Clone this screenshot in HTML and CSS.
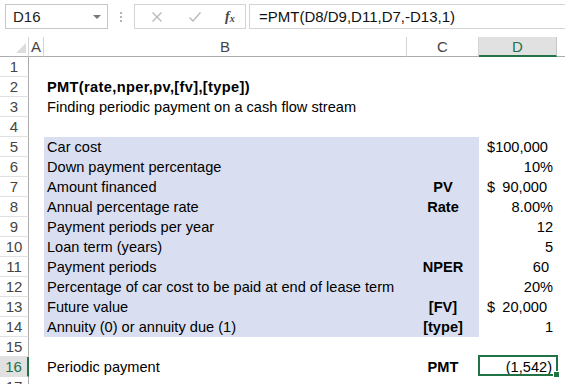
FILE: index.html
```html
<!DOCTYPE html>
<html>
<head>
<meta charset="utf-8">
<link rel="stylesheet" href="styles.css">
</head>
<body>
<div class="toolbar">
  <div class="namebox"><span>D16</span><span class="caret"></span></div>
  <div class="dots"><i></i><i></i><i></i></div>
  <div class="fxbox">
    <svg class="ic" width="12" height="12" viewBox="0 0 12 12"><path d="M1.5 1.5 L10.5 10.5 M10.5 1.5 L1.5 10.5" stroke="#b9b9b9" stroke-width="1.4" fill="none"/></svg>
    <svg class="ic" width="14" height="12" viewBox="0 0 14 12"><path d="M1.5 6.5 L5 10 L12.5 1.5" stroke="#b9b9b9" stroke-width="1.4" fill="none"/></svg>
    <span class="fx">f<sub>x</sub></span>
  </div>
  <div class="formula">=PMT(D8/D9,D11,D7,-D13,1)</div>
</div>
<div class="sheet">
  <div class="row head">
    <div class="corner"><span class="tri"></span></div>
    <div class="ch">A</div><div class="ch">B</div><div class="ch">C</div><div class="ch sel">D</div><div class="ch last"></div>
  </div>
  <div class="row"><div class="rh">1</div><div></div><div></div><div></div><div></div><div></div></div>
  <div class="row"><div class="rh">2</div><div></div><div class="b title">PMT(rate,nper,pv,[fv],[type])</div><div></div><div></div><div></div></div>
  <div class="row"><div class="rh">3</div><div></div><div class="b">Finding periodic payment on a cash flow stream</div><div></div><div></div><div></div></div>
  <div class="row"><div class="rh">4</div><div></div><div></div><div></div><div></div><div></div></div>
  <div class="row"><div class="rh">5</div><div></div><div class="b hl">Car cost</div><div class="c hl"></div><div class="d acc"><span>$</span><span>100,000</span></div><div></div></div>
  <div class="row"><div class="rh">6</div><div></div><div class="b hl">Down payment percentage</div><div class="c hl"></div><div class="d pct">10%</div><div></div></div>
  <div class="row"><div class="rh">7</div><div></div><div class="b hl">Amount financed</div><div class="c hl">PV</div><div class="d acc"><span>$</span><span>90,000</span></div><div></div></div>
  <div class="row"><div class="rh">8</div><div></div><div class="b hl">Annual percentage rate</div><div class="c hl">Rate</div><div class="d pct">8.00%</div><div></div></div>
  <div class="row"><div class="rh">9</div><div></div><div class="b hl">Payment periods per year</div><div class="c hl"></div><div class="d num">12</div><div></div></div>
  <div class="row"><div class="rh">10</div><div></div><div class="b hl">Loan term (years)</div><div class="c hl"></div><div class="d num">5</div><div></div></div>
  <div class="row"><div class="rh">11</div><div></div><div class="b hl">Payment periods</div><div class="c hl">NPER</div><div class="d num2">60</div><div></div></div>
  <div class="row"><div class="rh">12</div><div></div><div class="b hl">Percentage of car cost to be paid at end of lease term</div><div class="c hl"></div><div class="d pct">20%</div><div></div></div>
  <div class="row"><div class="rh">13</div><div></div><div class="b hl">Future value</div><div class="c hl">[FV]</div><div class="d acc"><span>$</span><span>20,000</span></div><div></div></div>
  <div class="row"><div class="rh">14</div><div></div><div class="b hl">Annuity (0) or annuity due (1)</div><div class="c hl">[type]</div><div class="d num">1</div><div></div></div>
  <div class="row"><div class="rh">15</div><div></div><div></div><div></div><div></div><div></div></div>
  <div class="row"><div class="rh active">16</div><div></div><div class="b">Periodic payment</div><div class="c">PMT</div><div class="d num active-cell">(1,542)</div><div></div></div>
  <div class="row"><div class="rh">17</div><div></div><div></div><div></div><div></div><div></div></div>
</div>
</body>
</html>
```

FILE: styles.css
```css
* { box-sizing: border-box; }
html, body { margin: 0; padding: 0; background: #fff; }
body {
  width: 565px;
  height: 384px;
  overflow: hidden;
  font-family: "Liberation Sans", Arial, sans-serif;
  font-size: 14.6px;
  color: #000;
}
.toolbar {
  height: 37px;
  display: flex;
  align-items: flex-start;
  padding-top: 4px;
  padding-left: 5px;
}
.namebox {
  width: 103px;
  height: 25px;
  border: 1px solid #c6c6c6;
  display: flex;
  align-items: center;
  justify-content: space-between;
  padding: 0 6px 0 7px;
  font-size: 15px;
  color: #222;
}
.caret {
  width: 0; height: 0;
  border-left: 4px solid transparent;
  border-right: 4px solid transparent;
  border-top: 4px solid #777;
  margin-top: 1px;
}
.dots {
  width: 26px;
  height: 25px;
  display: flex;
  flex-direction: column;
  align-items: center;
  justify-content: center;
  gap: 2px;
}
.dots i { width: 2px; height: 2px; background: #b4b4b4; display: block; }
.fxbox {
  width: 112px;
  height: 25px;
  border: 1px solid #d4d4d4;
  display: flex;
  align-items: center;
  padding-left: 16px;
  gap: 0;
}
.fxbox .ic:first-child { margin-right: 25px; }
.fxbox .ic:nth-child(2) { margin-right: 23px; }
.fx {
  font-family: "Liberation Serif", serif;
  font-style: italic;
  font-weight: bold;
  font-size: 14px;
  color: #444;
}
.fx sub { font-size: 10px; vertical-align: baseline; position: relative; top: 1px; }
.formula {
  margin-left: 3px;
  flex: 1;
  height: 25px;
  border: 1px solid #d4d4d4;
  border-right: none;
  display: flex;
  align-items: center;
  padding-left: 9px;
  font-size: 15px;
  color: #111;
}
.sheet { display: flex; flex-direction: column; }
.row {
  display: grid;
  grid-template-columns: 29px 15px 363px 72px 78px 1fr;
  height: 20px;
}
.row > div { display: flex; align-items: center; white-space: nowrap; }
.head { height: 20px; }
.corner {
  border-right: 1px solid #d4d4d4;
  border-bottom: 1px solid #ababab;
  justify-content: flex-end;
  align-items: flex-end !important;
  padding: 0 2px 3px 0;
}
.tri {
  width: 0; height: 0;
  border-left: 10px solid transparent;
  border-bottom: 10px solid #dcdcdc;
}
.ch {
  justify-content: center;
  border-right: 1px solid #d4d4d4;
  border-bottom: 1px solid #ababab;
  color: #444;
  font-size: 15px;
}
.ch:first-of-type { justify-content: flex-start; padding-left: 1px; }
.ch.sel {
  background: #e1e1e1;
  color: #217346;
  border-bottom: 2px solid #217346;
  border-right-color: #c6c6c6;
}
.ch.last { border-right: none; }
.rh {
  justify-content: center;
  border-right: 1px solid #ababab;
  border-bottom: 1px solid #e1e1e1;
  color: #444;
  font-size: 15px;
}
.rh.active {
  background: #e1e1e1;
  color: #217346;
  border-right: 2px solid #217346;
}
.b { padding-left: 3px; }
.title { font-weight: bold; letter-spacing: 0.35px; }
.hl { background: #d9dff1; }
.c { justify-content: center; font-weight: bold; }
.d { justify-content: flex-end; }
.acc { justify-content: space-between; padding: 0 10px 0 8px; }
.pct { padding-right: 4px; }
.num { padding-right: 4px; }
.num2 { padding-right: 8px; }
.active-cell { position: relative; padding-right: 5px; }
.active-cell::after {
  content: "";
  position: absolute;
  left: -1px; top: -2px; right: -1px; bottom: 1px;
  border: 2px solid #217346;
}
.active-cell::before {
  content: "";
  position: absolute;
  right: -3px; bottom: -1px;
  width: 5px; height: 5px;
  background: #217346;
  border: 1px solid #fff;
  z-index: 1;
}
```
